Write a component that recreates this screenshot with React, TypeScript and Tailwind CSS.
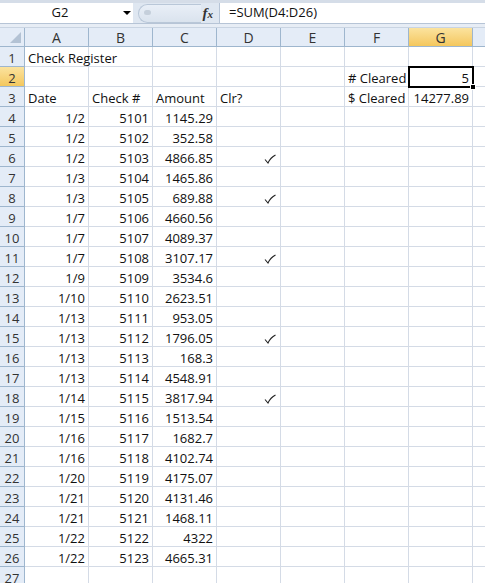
import React from 'react';

type Row = [string, string, string, boolean];

const data: Row[] = [
  ['1/2', '5101', '1145.29', false],
  ['1/2', '5102', '352.58', false],
  ['1/2', '5103', '4866.85', true],
  ['1/3', '5104', '1465.86', false],
  ['1/3', '5105', '689.88', true],
  ['1/7', '5106', '4660.56', false],
  ['1/7', '5107', '4089.37', false],
  ['1/7', '5108', '3107.17', true],
  ['1/9', '5109', '3534.6', false],
  ['1/10', '5110', '2623.51', false],
  ['1/13', '5111', '953.05', false],
  ['1/13', '5112', '1796.05', true],
  ['1/13', '5113', '168.3', false],
  ['1/13', '5114', '4548.91', false],
  ['1/14', '5115', '3817.94', true],
  ['1/15', '5116', '1513.54', false],
  ['1/16', '5117', '1682.7', false],
  ['1/16', '5118', '4102.74', false],
  ['1/20', '5119', '4175.07', false],
  ['1/21', '5120', '4131.46', false],
  ['1/21', '5121', '1468.11', false],
  ['1/22', '5122', '4322', false],
  ['1/22', '5123', '4665.31', false],
];

const cols = ['A', 'B', 'C', 'D', 'E', 'F', 'G', 'H'];

function Check() {
  return (
    <svg width="12" height="10" viewBox="0 0 12 10" className="text-[#222] mr-[1px]">
      <path d="M1 5.5 L4 9 Q6.5 3.5 11.5 1" fill="none" stroke="currentColor" strokeWidth="1.1" />
    </svg>
  );
}

function Cell({ children, right }: { children?: React.ReactNode; right?: boolean }) {
  return (
    <div
      className={
        'h-[20px] border-r border-b border-[#d4dbe6] flex items-center px-[3px] pt-[5px] whitespace-nowrap ' +
        (right ? 'justify-end' : 'justify-start')
      }
    >
      {children}
    </div>
  );
}

function RowHead({ n, active }: { n: number; active?: boolean }) {
  return (
    <div
      className={
        'h-[20px] border-r border-b border-[#9eb6ce] flex items-center justify-center pt-[4px] text-[13px] text-[#333] ' +
        (active ? 'bg-gradient-to-b from-[#fbe39e] to-[#f4c75c]' : 'bg-[#e4ecf7]')
      }
    >
      {n}
    </div>
  );
}

export default function App() {
  const rows: React.ReactNode[][] = [];

  // row 1
  rows.push([
    <Cell key="a">Check Register</Cell>,
    ...cols.slice(1).map((c) => <Cell key={c} />),
  ]);
  // row 2
  rows.push([
    ...cols.slice(0, 5).map((c) => <Cell key={c} />),
    <Cell key="f"># Cleared</Cell>,
    <div key="g" className="relative h-[20px] border-r border-b border-[#d4dbe6]">
      <div className="absolute -left-[1px] -top-[1px] w-[66px] h-[22px] border-2 border-black flex items-center justify-end pr-[3px] pt-[4px]">
        5
      </div>
      <div className="absolute right-[-4px] bottom-[-4px] w-[6px] h-[6px] bg-black border border-white" />
    </div>,
    <Cell key="h" />,
  ]);
  // row 3
  rows.push([
    <Cell key="a">Date</Cell>,
    <Cell key="b">Check #</Cell>,
    <Cell key="c">Amount</Cell>,
    <Cell key="d">Clr?</Cell>,
    <Cell key="e" />,
    <Cell key="f">$ Cleared</Cell>,
    <Cell key="g" right>
      14277.89
    </Cell>,
    <Cell key="h" />,
  ]);
  data.forEach(([d, n, amt, clr]) => {
    rows.push([
      <Cell key="a" right>
        {d}
      </Cell>,
      <Cell key="b" right>
        {n}
      </Cell>,
      <Cell key="c" right>
        {amt}
      </Cell>,
      <Cell key="d" right>
        {clr ? <Check /> : null}
      </Cell>,
      <Cell key="e" />,
      <Cell key="f" />,
      <Cell key="g" />,
      <Cell key="h" />,
    ]);
  });
  rows.push(cols.map((c) => <Cell key={c} />));

  return (
    <div
      className="w-[485px] h-[583px] overflow-hidden bg-white text-[13px] text-[#111]"
      style={{ fontFamily: '"Open Sans", Lato, sans-serif' }}
    >
      {/* top strip */}
      <div className="h-[3px] bg-[#d5dde8]" />
      {/* formula bar */}
      <div className="h-[21px] flex border-b border-[#b6c4d6]">
        <div className="w-[133px] bg-white relative flex items-center">
          <span className="w-[120px] text-center">G2</span>
          <span className="absolute right-[2px] top-[8px] w-0 h-0 border-l-[4px] border-r-[4px] border-t-[4px] border-l-transparent border-r-transparent border-t-black" />
        </div>
        <div className="w-[87px] bg-[#dfe7f1] flex items-center pl-[5px] pr-[6px] border-r border-[#b6c4d6]">
          <div className="relative h-[19px] flex-1 rounded-l-full border border-r-0 border-[#b9c7d8] bg-gradient-to-b from-[#e9eff7] to-[#dae3ee]">
            <div className="absolute left-[5px] top-[5px] w-[7px] h-[5px] rounded-full bg-[#c5cfdb]" />
          </div>
          <span
            className="italic font-bold text-[15px] text-[#333] ml-[2px]"
            style={{ fontFamily: '"Liberation Serif", serif' }}
          >
            f<span className="text-[11px]">x</span>
          </span>
        </div>
        <div className="flex-1 bg-white flex items-center pl-[9px]">=SUM(D4:D26)</div>
      </div>
      <div className="h-[4px] bg-[#e7edf5] border-b border-[#c9d4e2]" />
      {/* sheet */}
      <div className="grid grid-cols-[25px_64px_64px_64px_64px_64px_64px_64px_64px]">
        <div className="h-[19px] border-r border-b border-[#9eb6ce] bg-[#e4ecf7] relative">
          <svg className="absolute right-[3px] bottom-[3px]" width="11" height="11" viewBox="0 0 11 11">
            <path d="M11 0 L11 11 L0 11 Z" fill="#b3c2d4" />
          </svg>
        </div>
        {cols.map((c) => (
          <div
            key={c}
            className={
              'h-[19px] border-r border-b border-[#9eb6ce] flex items-center justify-center pt-[1px] text-[14px] text-[#333] ' +
              (c === 'G' ? 'bg-gradient-to-b from-[#fbe39e] to-[#f4c75c]' : 'bg-[#e4ecf7]')
            }
          >
            {c === 'H' ? '' : c}
          </div>
        ))}
        {rows.map((r, i) => (
          <React.Fragment key={i}>
            <RowHead n={i + 1} active={i === 1} />
            {r}
          </React.Fragment>
        ))}
      </div>
    </div>
  );
}
